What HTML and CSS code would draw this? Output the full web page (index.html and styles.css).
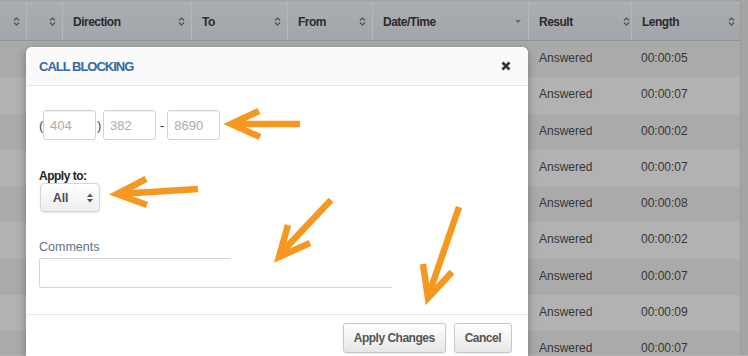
FILE: index.html
```html
<!DOCTYPE html>
<html>
<head>
<meta charset="utf-8">
<title>Call Blocking</title>
<link rel="stylesheet" href="styles.css">
</head>
<body>
<div class="page">
  <div class="table">
    <div class="thead">
      <div class="hc hc-icon"><svg class="sort" viewBox="0 0 7 11"><path d="M1 4.5 L3.5 2 L6 4.5 M1 6.5 L3.5 9 L6 6.5"/></svg></div>
      <div class="hc hc-icon"><svg class="sort" viewBox="0 0 7 11"><path d="M1 4.5 L3.5 2 L6 4.5 M1 6.5 L3.5 9 L6 6.5"/></svg></div>
      <div class="hc"><span>Direction</span><svg class="sort" viewBox="0 0 7 11"><path d="M1 4.5 L3.5 2 L6 4.5 M1 6.5 L3.5 9 L6 6.5"/></svg></div>
      <div class="hc"><span>To</span><svg class="sort" viewBox="0 0 7 11"><path d="M1 4.5 L3.5 2 L6 4.5 M1 6.5 L3.5 9 L6 6.5"/></svg></div>
      <div class="hc"><span>From</span><svg class="sort" viewBox="0 0 7 11"><path d="M1 4.5 L3.5 2 L6 4.5 M1 6.5 L3.5 9 L6 6.5"/></svg></div>
      <div class="hc"><span>Date/Time</span><svg class="tri" viewBox="0 0 6 3"><polygon points="0,0 6,0 3,3"/></svg></div>
      <div class="hc hc-result"><span>Result</span><svg class="sort" viewBox="0 0 7 11"><path d="M1 4.5 L3.5 2 L6 4.5 M1 6.5 L3.5 9 L6 6.5"/></svg></div>
      <div class="hc hc-length"><span>Length</span><svg class="sort" viewBox="0 0 7 11"><path d="M1 4.5 L3.5 2 L6 4.5 M1 6.5 L3.5 9 L6 6.5"/></svg></div>
    </div>
    <div class="row"><div class="cell c-result">Answered</div><div class="cell">00:00:05</div></div>
    <div class="row"><div class="cell c-result">Answered</div><div class="cell">00:00:07</div></div>
    <div class="row"><div class="cell c-result">Answered</div><div class="cell">00:00:02</div></div>
    <div class="row"><div class="cell c-result">Answered</div><div class="cell">00:00:07</div></div>
    <div class="row"><div class="cell c-result">Answered</div><div class="cell">00:00:08</div></div>
    <div class="row"><div class="cell c-result">Answered</div><div class="cell">00:00:02</div></div>
    <div class="row"><div class="cell c-result">Answered</div><div class="cell">00:00:07</div></div>
    <div class="row"><div class="cell c-result">Answered</div><div class="cell">00:00:09</div></div>
    <div class="row row-last"><div class="cell c-result">Answered</div><div class="cell">00:00:07</div></div>
  </div>
</div>

<div class="modal">
  <div class="modal-header">
    <span class="title">CALL BLOCKING</span>
    <svg class="close" viewBox="0 0 10 10"><path d="M1.5 1.5 L8.5 8.5 M8.5 1.5 L1.5 8.5"/></svg>
  </div>
  <div class="modal-body">
    <div class="phone">
      <span class="paren">(</span>
      <div class="field">404</div>
      <span class="paren paren-close">)</span>
      <div class="field field-2">382</div>
      <span class="dash">-</span>
      <div class="field field-3">8690</div>
    </div>
    <div class="label-bold">Apply to:</div>
    <div class="select"><span>All</span><svg class="updown" viewBox="0 0 6 10"><polygon points="3,0.5 6,4 0,4"/><polygon points="0,6 6,6 3,9.5"/></svg></div>
    <div class="label-light">Comments</div>
    <div class="textarea"></div>
  </div>
  <div class="modal-footer">
    <div class="btn">Apply Changes</div>
    <div class="btn">Cancel</div>
  </div>
</div>

<svg class="arrows" viewBox="0 0 748 356">
  <rect class="patch" x="231" y="250" width="170" height="37"/>
  <g class="arrow">
    <path d="M300 124 L232 124"/>
    <path d="M259 111 L231 124 L260 137"/>
    <path d="M198 189 L119 194"/>
    <path d="M146 179 L117 194 L147 205"/>
    <path d="M331 200 L281 253"/>
    <path d="M288 225 L279 257 L310 243"/>
    <path d="M459 207 L429 294"/>
    <path d="M423 264 L428 298 L452 272"/>
  </g>
</svg>
</body>
</html>
```

FILE: styles.css
```css
html, body {
  margin: 0;
  padding: 0;
}

body {
  width: 748px;
  height: 356px;
  overflow: hidden;
  position: relative;
  background: #b1b1b1;
  font-family: "Liberation Sans", Arial, sans-serif;
}

.page {
  padding-top: 2px;
  background: #a4a4a4;
}

.table {
  width: 740px;
  border-right: 1px solid #9d9d9d;
}

.thead {
  display: grid;
  grid-template-columns: 26px 36px 129px 96px 85px 156px 103px 109px;
  height: 37px;
  border-top: 1px solid #b3b6b9;
  border-bottom: 1px solid #909498;
  background: linear-gradient(#aaaeb2, #a2a6aa);
}

.hc {
  display: flex;
  align-items: center;
  justify-content: space-between;
  padding: 0 6px 0 10px;
  border-left: 1px solid #b5b8bb;
  font-size: 12px;
  font-weight: bold;
  letter-spacing: -0.5px;
  color: #2b2b2b;
}

.hc:first-child {
  border-left: none;
}

.hc-icon {
  justify-content: flex-end;
}

.hc-result {
  padding-right: 1px;
}

.hc-length {
  padding-right: 5px;
}

.sort {
  width: 7px;
  height: 11px;
  fill: none;
  stroke: #55595d;
  stroke-width: 1.3;
}

.tri {
  width: 6px;
  height: 3px;
  fill: #666a6e;
  margin-right: 1px;
}

.row {
  display: grid;
  grid-template-columns: 528px 103px 109px;
  height: 36.25px;
  background: #aaaaaa;
}

.row:nth-child(odd) {
  background: #b2b2b2;
}

.row-last {
  height: 24px;
  overflow: hidden;
}

.row::before {
  content: "";
}

.cell {
  padding: 9px 0 0 10px;
  font-size: 12px;
  line-height: 16px;
  color: #353535;
}

.c-result {
  padding-left: 11px;
}

/* Modal */
.modal {
  position: absolute;
  left: 26px;
  top: 47px;
  width: 502px;
  height: 309px;
  background: #fff;
  border-radius: 6px 6px 0 0;
  box-shadow: 0 3px 10px rgba(0, 0, 0, 0.3);
  display: flex;
  flex-direction: column;
}

.modal-header {
  height: 38px;
  flex: none;
  border-bottom: 1px solid #e3e3e3;
  background: #fafafa;
  border-radius: 6px 6px 0 0;
  display: flex;
  align-items: center;
  justify-content: space-between;
  padding: 0 17px 0 13px;
}

.title {
  font-size: 13px;
  font-weight: bold;
  letter-spacing: -1px;
  color: #3469a0;
}

.close {
  width: 10px;
  height: 10px;
  fill: none;
  stroke: #333;
  stroke-width: 2.6;
}

.modal-body {
  height: 228px;
  flex: none;
  box-sizing: border-box;
  padding: 24px 13px 0;
}

.phone {
  display: flex;
  align-items: center;
  height: 30px;
}

.paren {
  font-size: 13px;
  color: #2f4f78;
  width: 4px;
}

.paren-close {
  margin-left: 1px;
}

.dash {
  font-size: 13px;
  color: #333;
  margin-left: 4px;
}

.field {
  width: 53px;
  height: 30px;
  box-sizing: border-box;
  border: 1px solid #d2d2d2;
  border-radius: 3px;
  box-shadow: inset 0 1px 1px rgba(0, 0, 0, 0.05);
  padding-left: 6px;
  display: flex;
  align-items: center;
  font-size: 13px;
  color: #ababab;
}

.field-2 {
  margin-left: 2px;
}

.field-3 {
  margin-left: 3px;
}

.label-bold {
  margin-top: 30px;
  font-size: 12px;
  font-weight: bold;
  letter-spacing: -0.5px;
  line-height: 13px;
  color: #222;
}

.select {
  width: 60px;
  height: 29px;
  margin-left: 1px;
  box-sizing: border-box;
  border: 1px solid #d6d6d6;
  border-radius: 4px;
  background: linear-gradient(#ffffff, #eeeeee);
  box-shadow: 0 1px 2px rgba(0, 0, 0, 0.1);
  display: flex;
  align-items: center;
  justify-content: space-between;
  padding: 0 6px 0 12px;
  font-size: 12px;
  font-weight: bold;
  color: #4a4a4a;
}

.updown {
  width: 6px;
  height: 10px;
  fill: #555;
}

.label-light {
  margin-top: 28px;
  font-size: 12.5px;
  line-height: 15px;
  color: #627282;
}

.textarea {
  margin-top: 3px;
  width: 354px;
  height: 30px;
  box-sizing: border-box;
  border: 1px solid #d5d5d5;
  border-radius: 2px;
}

.modal-footer {
  flex: none;
  border-top: 1px solid #e5e5e5;
  padding: 8px 16px 0 0;
  display: flex;
  justify-content: flex-end;
  gap: 8px;
}

.btn {
  height: 30px;
  box-sizing: border-box;
  padding: 0 10px;
  border: 1px solid #c8c8c8;
  border-radius: 3px;
  background: linear-gradient(#ffffff, #e6e6e6);
  box-shadow: 0 1px 1px rgba(0, 0, 0, 0.08);
  display: flex;
  align-items: center;
  font-size: 12px;
  font-weight: bold;
  letter-spacing: -0.5px;
  color: #555;
}

/* Annotation arrows */
.arrows {
  position: absolute;
  left: 0;
  top: 0;
  width: 748px;
  height: 356px;
  pointer-events: none;
}

.patch {
  fill: #fff;
}

.arrow path {
  fill: none;
  stroke: #f6981f;
  stroke-width: 6.5;
  stroke-linecap: butt;
  stroke-linejoin: miter;
  stroke-miterlimit: 3;
}
```
